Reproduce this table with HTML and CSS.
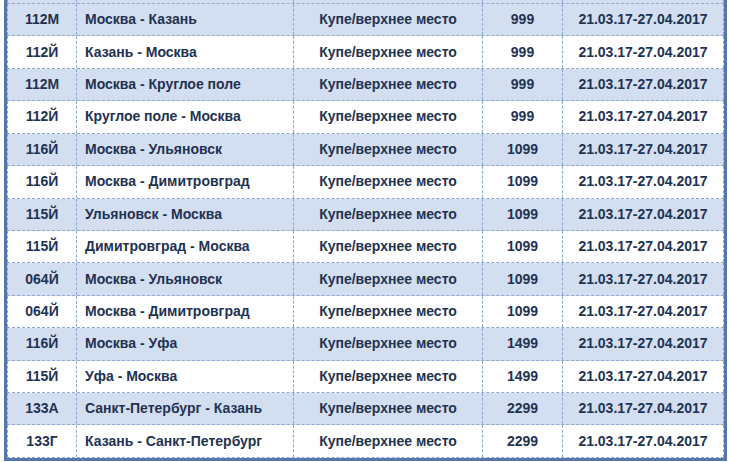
FILE: index.html
```html
<!DOCTYPE html>
<html lang="ru">
<head>
<meta charset="utf-8">
<title>Тарифы</title>
<link rel="stylesheet" href="styles.css">
</head>
<body>
<div class="frame">
  <div class="row head"><div></div><div></div><div></div><div></div><div></div></div>
  <div class="row alt"><div>112М</div><div class="route">Москва - Казань</div><div>Купе/верхнее место</div><div>999</div><div>21.03.17-27.04.2017</div></div>
  <div class="row"><div>112Й</div><div class="route">Казань - Москва</div><div>Купе/верхнее место</div><div>999</div><div>21.03.17-27.04.2017</div></div>
  <div class="row alt"><div>112М</div><div class="route">Москва - Круглое поле</div><div>Купе/верхнее место</div><div>999</div><div>21.03.17-27.04.2017</div></div>
  <div class="row"><div>112Й</div><div class="route">Круглое поле - Москва</div><div>Купе/верхнее место</div><div>999</div><div>21.03.17-27.04.2017</div></div>
  <div class="row alt"><div>116Й</div><div class="route">Москва - Ульяновск</div><div>Купе/верхнее место</div><div>1099</div><div>21.03.17-27.04.2017</div></div>
  <div class="row"><div>116Й</div><div class="route">Москва - Димитровград</div><div>Купе/верхнее место</div><div>1099</div><div>21.03.17-27.04.2017</div></div>
  <div class="row alt"><div>115Й</div><div class="route">Ульяновск - Москва</div><div>Купе/верхнее место</div><div>1099</div><div>21.03.17-27.04.2017</div></div>
  <div class="row"><div>115Й</div><div class="route">Димитровград - Москва</div><div>Купе/верхнее место</div><div>1099</div><div>21.03.17-27.04.2017</div></div>
  <div class="row alt"><div>064Й</div><div class="route">Москва - Ульяновск</div><div>Купе/верхнее место</div><div>1099</div><div>21.03.17-27.04.2017</div></div>
  <div class="row"><div>064Й</div><div class="route">Москва - Димитровград</div><div>Купе/верхнее место</div><div>1099</div><div>21.03.17-27.04.2017</div></div>
  <div class="row alt"><div>116Й</div><div class="route">Москва - Уфа</div><div>Купе/верхнее место</div><div>1499</div><div>21.03.17-27.04.2017</div></div>
  <div class="row"><div>115Й</div><div class="route">Уфа - Москва</div><div>Купе/верхнее место</div><div>1499</div><div>21.03.17-27.04.2017</div></div>
  <div class="row alt"><div>133А</div><div class="route">Санкт-Петербург - Казань</div><div>Купе/верхнее место</div><div>2299</div><div>21.03.17-27.04.2017</div></div>
  <div class="row"><div>133Г</div><div class="route">Казань - Санкт-Петербург</div><div>Купе/верхнее место</div><div>2299</div><div>21.03.17-27.04.2017</div></div>
</div>
</body>
</html>
```
FILE: styles.css
```css
html, body {
  margin: 0;
  padding: 0;
  background: #ffffff;
}
body {
  font-family: "Liberation Sans", Arial, sans-serif;
  font-size: 14px;
  font-weight: bold;
  color: #1f3252;
}
.frame {
  margin-left: 4px;
  width: 717px;
  border-left: 3px solid #5676ad;
  border-right: 3px solid #5676ad;
  border-bottom: 3px solid #5676ad;
}
.row {
  display: grid;
  grid-template-columns: 69px 217px 189px 80px 1fr;
  height: 32.43px;
  border-bottom: 1px dashed #8ea7cf;
  box-sizing: border-box;
  background: #ffffff;
}
.row.alt, .row.head {
  background: #d3dff0;
}
.row.head {
  height: 4px;
}
.row > div {
  display: flex;
  align-items: center;
  justify-content: center;
  border-left: 1px dashed #8ea7cf;
  box-sizing: border-box;
  white-space: nowrap;
  padding-bottom: 1px;
}
.row > div:last-child {
  border-right: 1px dashed #8ea7cf;
}
.row > .route {
  justify-content: flex-start;
  padding-left: 8px;
}
```
